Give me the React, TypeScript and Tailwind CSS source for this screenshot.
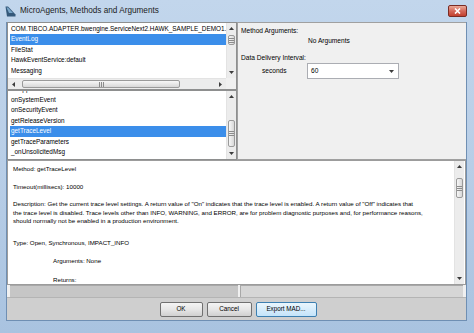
import type { ReactNode } from 'react'

type Dir = 'up' | 'down' | 'left' | 'right'

const arrowPaths: Record<Dir, string> = {
  up: 'M0 3L2.5 0L5 3Z',
  down: 'M0 0H5L2.5 3Z',
  left: 'M3 0V5L0 2.5Z',
  right: 'M0 0V5L3 2.5Z',
}

function Arrow({ dir }: { dir: Dir }) {
  const v = dir === 'up' || dir === 'down'
  return (
    <svg width={v ? 5 : 3} height={v ? 3 : 5} viewBox={v ? '0 0 5 3' : '0 0 3 5'}>
      <path d={arrowPaths[dir]} fill="#3c3c3c" />
    </svg>
  )
}

function Grip({ vertical }: { vertical?: boolean }) {
  return (
    <svg width="5" height="5" viewBox="0 0 5 5">
      <path d={vertical ? 'M0 0.5H5M0 2.5H5M0 4.5H5' : 'M0.5 0V5M2.5 0V5M4.5 0V5'} stroke="#8c8c8c" strokeWidth="1" />
    </svg>
  )
}

function VScroll({ thumb }: { thumb: string }) {
  return (
    <div className="flex w-[10px] shrink-0 flex-col border-l border-[#e3e3e3] bg-[#ececec]">
      <div className="flex h-[11px] shrink-0 items-center justify-center"><Arrow dir="up" /></div>
      <div className="min-h-0 flex-1">
        <div className={`mx-[1px] flex items-center justify-center rounded-[2px] border border-[#9a9a9a] bg-gradient-to-r from-[#f7f7f7] to-[#d8d8d8] ${thumb}`}>
          <Grip vertical />
        </div>
      </div>
      <div className="flex h-[11px] shrink-0 items-center justify-center"><Arrow dir="down" /></div>
    </div>
  )
}

function HScroll() {
  return (
    <div className="flex h-[11px] shrink-0 border-t border-[#e3e3e3] bg-[#ececec]">
      <div className="flex w-[11px] shrink-0 items-center justify-center"><Arrow dir="left" /></div>
      <div className="min-w-0 flex-1 py-[1px]">
        <div className="ml-[3px] flex h-full w-[158px] items-center justify-center rounded-[2px] border border-[#9a9a9a] bg-gradient-to-b from-[#f7f7f7] to-[#d8d8d8]">
          <Grip />
        </div>
      </div>
      <div className="flex w-[11px] shrink-0 items-center justify-center"><Arrow dir="right" /></div>
    </div>
  )
}

function Row({ label, selected }: { label: string; selected?: boolean }) {
  return (
    <div
      className={
        selected
          ? 'h-[10.4px] overflow-hidden whitespace-nowrap bg-[#3b8eea] pl-[1px] leading-[10.4px] text-white'
          : 'h-[10.4px] overflow-hidden whitespace-nowrap pl-[1px] leading-[10.4px]'
      }
    >
      {label}
    </div>
  )
}

function HawkIcon() {
  return (
    <svg width="11" height="11" viewBox="0 0 11 11">
      <path d="M0.5 0.5L3 0.5L10.5 8.5L10.5 10.5L2 10.5Z" fill="#35597a" />
      <path d="M1.5 1.5L3 1.5L8 7L4 7Z" fill="#7aa6c8" />
    </svg>
  )
}

function TitleBar() {
  return (
    <div className="flex h-[22px] shrink-0 items-center pl-[5px] pr-[7px]">
      <HawkIcon />
      <span className="ml-[4px] text-[8.2px] text-[#1b1b1b]">MicroAgents, Methods and Arguments</span>
      <div className="ml-auto flex h-[12px] w-[19px] items-center justify-center rounded-[2px] border border-[#7a2c24] bg-gradient-to-b from-[#eaa998] via-[#d4685a] to-[#c23f2e]">
        <svg width="7" height="6" viewBox="0 0 7 6">
          <path d="M1 0.5L6 5.5M6 0.5L1 5.5" stroke="white" strokeWidth="1.6" />
        </svg>
      </div>
    </div>
  )
}

function Button({ children, primary, width }: { children: ReactNode; primary?: boolean; width: string }) {
  return (
    <div
      className={
        primary
          ? `flex h-[15px] items-center justify-center rounded-[2px] border border-[#3c7fb1] bg-gradient-to-b from-[#eaf6fd] to-[#c4e4fa] ${width}`
          : `flex h-[15px] items-center justify-center rounded-[2px] border border-[#707070] bg-gradient-to-b from-[#f4f4f4] via-[#e6e6e6] to-[#d0d0d0] ${width}`
      }
    >
      {children}
    </div>
  )
}

export default function App() {
  return (
    <div className="flex h-[333px] w-[474px] flex-col overflow-hidden bg-gradient-to-b from-[#c2d6ec] via-[#b8cee7] to-[#a9c3e0] font-['Liberation_Sans',Arial,sans-serif] text-black">
      <TitleBar />
      <div className="flex min-h-0 flex-1 flex-col pb-[12px] pl-[6px] pr-[7px]">
        <div className="flex min-h-0 flex-1 flex-col border-x border-b border-[#6f8fb3] bg-[#f0f0f0]">
          {/* lists + arguments */}
          <div className="flex h-[138px] shrink-0">
            <div className="flex w-[230px] shrink-0 flex-col text-[6.4px]">
              <div className="flex h-[68px] shrink-0 flex-col border border-[#8e8f8f] bg-white">
                <div className="flex min-h-0 flex-1">
                  <div className="min-w-0 flex-1 overflow-hidden pl-[2px] pt-[1px]">
                    <Row label="COM.TIBCO.ADAPTER.bwengine.ServiceNext2.HAWK_SAMPLE_DEMO1.F" />
                    <Row label="EventLog" selected />
                    <Row label="FileStat" />
                    <Row label="HawkEventService:default" />
                    <Row label="Messaging" />
                  </div>
                  <VScroll thumb="mt-[1px] h-[10px]" />
                </div>
                <div className="flex">
                  <div className="min-w-0 flex-1"><HScroll /></div>
                  <div className="w-[10px] shrink-0 bg-[#f0f0f0]" />
                </div>
              </div>
              <div className="flex h-[70px] shrink-0 border border-[#8e8f8f] bg-white">
                <div className="min-w-0 flex-1 overflow-hidden pl-[2px]">
                  {/* row scrolled almost out of view: only its descenders show */}
                  <div className="h-[4px] overflow-hidden">
                    <div className="mt-[-7px] whitespace-nowrap pl-[1px] leading-[10.4px]">onApplicationEvent</div>
                  </div>
                  <Row label="onSystemEvent" />
                  <Row label="onSecurityEvent" />
                  <Row label="getReleaseVersion" />
                  <Row label="getTraceLevel" selected />
                  <Row label="getTraceParameters" />
                  <Row label="_onUnsolicitedMsg" />
                </div>
                <VScroll thumb="mt-[18px] h-[27px]" />
              </div>
            </div>
            <div className="flex min-w-0 flex-1 flex-col border-b border-l border-t border-[#a0a0a0] bg-[#f0f0f0] text-[6.6px] leading-[8px]">
              <div className="mt-[4px] pl-[3px]">Method Arguments:</div>
              <div className="mt-[2px] pl-[70px]">No Arguments</div>
              <div className="mt-[9px] pl-[3px]">Data Delivery Interval:</div>
              <div className="mt-[1px] flex items-center pl-[24px]">
                <span className="w-[45px]">seconds</span>
                <div className="flex h-[16px] w-[92px] items-center justify-between border border-[#abadb3] bg-white pl-[3px] pr-[4px]">
                  <span>60</span>
                  <Arrow dir="down" />
                </div>
              </div>
            </div>
          </div>

          {/* method details */}
          <div className="flex h-[125px] shrink-0 border border-[#9c9c9c] bg-white">
            <div className="min-w-0 flex-1 overflow-hidden whitespace-nowrap pl-[5px] pt-[4px] text-[6.2px] leading-[8.6px]">
              <div>Method: getTraceLevel</div>
              <div className="mt-[9px]">Timeout(millisecs): 10000</div>
              <div className="mt-[9px] leading-[8.5px]">
                <div>Description: Get the current trace level settings. A return value of "On" indicates that the trace level is enabled. A return value of "Off" indicates that</div>
                <div>the trace level is disabled. Trace levels other than INFO, WARNING, and ERROR, are for problem diagnostic purposes and, for performance reasons,</div>
                <div>should normally not be enabled in a production environment.</div>
              </div>
              <div className="mt-[13.5px]">Type: Open, Synchronous, IMPACT_INFO</div>
              <div className="mt-[9.7px] pl-[40px]">Arguments: None</div>
              <div className="mt-[9.7px] pl-[40px]">Returns:</div>
            </div>
            <VScroll thumb="mt-[6px] h-[20px]" />
            <div className="w-[1px] shrink-0" />
          </div>

          {/* split bars */}
          <div className="flex h-[12px] shrink-0 gap-[2px] px-[3px]">
            <div className="w-[228px] shrink-0 border-t border-[#a8a8a8] bg-[#c6c6c6]" />
            <div className="min-w-0 flex-1 border-l border-t border-[#a8a8a8] bg-[#d6d6d6]" />
          </div>

          {/* buttons */}
          <div className="flex min-h-0 flex-1 items-center justify-center gap-[4px] border-t border-[#b4b4b4] bg-[#cfcfcf] pl-[3px] text-[6.3px]">
            <Button width="w-[43px]">OK</Button>
            <Button width="w-[45px]">Cancel</Button>
            <Button width="w-[61px]" primary>Export MAD...</Button>
          </div>
        </div>
      </div>
    </div>
  )
}
